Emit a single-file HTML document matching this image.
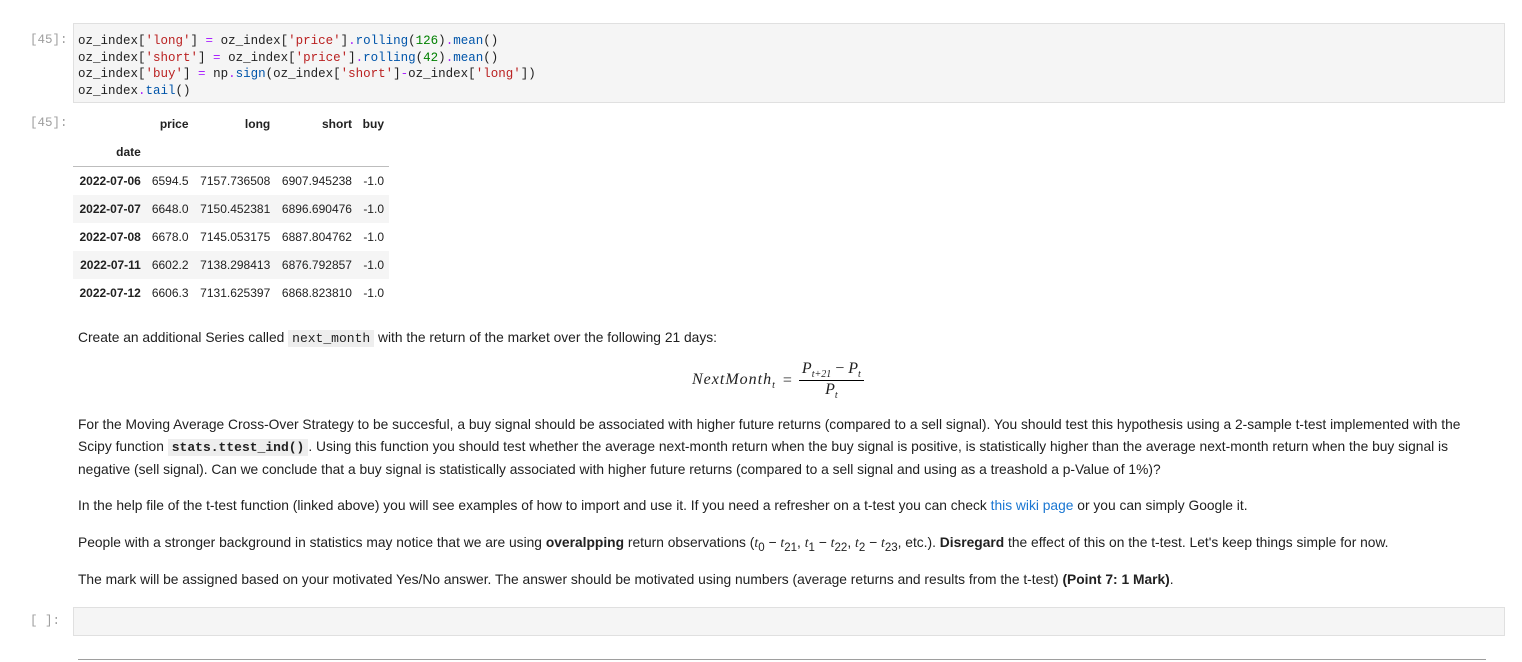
<!DOCTYPE html>
<html><head><style>
body{margin:0;background:#fff;font-family:"Liberation Sans",sans-serif;color:#212121;width:1522px;height:662px;overflow:hidden;position:relative}
.p{position:absolute;left:30px;font-family:"Liberation Mono",monospace;font-size:12.5px;color:#9e9e9e}
.in{position:absolute;left:73px;width:1432px;background:#f5f5f5;border:1px solid #e0e0e0;box-sizing:border-box}
pre{margin:0;font-family:"Liberation Mono",monospace;font-size:12.5px;line-height:16.5px;padding:9px 0 0 4px;color:#212121}
.s{color:#ba2121}.o{color:#aa22ff}.n{color:#008000}.f{color:#0055aa}
table{position:absolute;left:73px;top:110px;border-collapse:collapse;font-size:12px;width:316px}
th,td{text-align:right;padding:0 5px;height:28px}
th{font-weight:bold}
thead tr.d th{border-bottom:1px solid #bdbdbd}
tbody tr:nth-child(odd){background:#fff}tbody tr:nth-child(even){background:#f5f5f5}
.t{position:absolute;left:78px;font-size:13.8px;line-height:22px;width:1410px}
code{font-family:"Liberation Mono",monospace;background:#eee;padding:1px 4px;font-size:13px}
a{color:#1976d2;text-decoration:none}
</style></head><body>
<div class="p" style="top:33px">[45]:</div>
<div class="in" style="top:23px;height:80px"><pre>oz_index[<span class="s">'long'</span>] <span class="o">=</span> oz_index[<span class="s">'price'</span>]<span class="o">.</span><span class="f">rolling</span>(<span class="n">126</span>)<span class="o">.</span><span class="f">mean</span>()
oz_index[<span class="s">'short'</span>] <span class="o">=</span> oz_index[<span class="s">'price'</span>]<span class="o">.</span><span class="f">rolling</span>(<span class="n">42</span>)<span class="o">.</span><span class="f">mean</span>()
oz_index[<span class="s">'buy'</span>] <span class="o">=</span> np<span class="o">.</span><span class="f">sign</span>(oz_index[<span class="s">'short'</span>]<span class="o">-</span>oz_index[<span class="s">'long'</span>])
oz_index<span class="o">.</span><span class="f">tail</span>()</pre></div>
<div class="p" style="top:116px">[45]:</div>
<table><thead><tr><th></th><th>price</th><th>long</th><th>short</th><th>buy</th></tr>
<tr class="d"><th>date</th><th></th><th></th><th></th><th></th></tr></thead>
<tbody>
<tr><th>2022-07-06</th><td>6594.5</td><td>7157.736508</td><td>6907.945238</td><td>-1.0</td></tr>
<tr><th>2022-07-07</th><td>6648.0</td><td>7150.452381</td><td>6896.690476</td><td>-1.0</td></tr>
<tr><th>2022-07-08</th><td>6678.0</td><td>7145.053175</td><td>6887.804762</td><td>-1.0</td></tr>
<tr><th>2022-07-11</th><td>6602.2</td><td>7138.298413</td><td>6876.792857</td><td>-1.0</td></tr>
<tr><th>2022-07-12</th><td>6606.3</td><td>7131.625397</td><td>6868.823810</td><td>-1.0</td></tr>
</tbody></table>
<div class="t" style="top:327px">Create an additional Series called <code>next_month</code> with the return of the market over the following 21 days:</div>
<div style="position:absolute;left:692px;top:360px;font-family:'Liberation Serif',serif;font-size:16px;font-style:italic;display:flex;align-items:center">
<span style="letter-spacing:1px">NextMonth<sub style="font-size:10px">t</sub></span><span style="font-style:normal;margin:0 7px">=</span>
<span style="display:inline-flex;flex-direction:column;align-items:center"><span style="border-bottom:1px solid #000;padding:0 3px">P<sub style="font-size:10px">t+21</sub> <span style="font-style:normal">−</span> P<sub style="font-size:10px">t</sub></span><span>P<sub style="font-size:10px">t</sub></span></span></div>
<div class="t" style="top:414px">For the Moving Average Cross-Over Strategy to be succesful, a buy signal should be associated with higher future returns (compared to a sell signal). You should test this hypothesis using a 2-sample t-test implemented with the Scipy function <code><b>stats.ttest_ind()</b></code>. Using this function you should test whether the average next-month return when the buy signal is positive, is statistically higher than the average next-month return when the buy signal is negative (sell signal). Can we conclude that a buy signal is statistically associated with higher future returns (compared to a sell signal and using as a treashold a p-Value of 1%)?</div>
<div class="t" style="top:495px">In the help file of the t-test function (linked above) you will see examples of how to import and use it. If you need a refresher on a t-test you can check <a>this wiki page</a> or you can simply Google it.</div>
<div class="t" style="top:532px">People with a stronger background in statistics may notice that we are using <b>overalpping</b> return observations (<i style="font-family:'Liberation Serif',serif">t</i><sub>0</sub> − <i style="font-family:'Liberation Serif',serif">t</i><sub>21</sub>, <i style="font-family:'Liberation Serif',serif">t</i><sub>1</sub> − <i style="font-family:'Liberation Serif',serif">t</i><sub>22</sub>, <i style="font-family:'Liberation Serif',serif">t</i><sub>2</sub> − <i style="font-family:'Liberation Serif',serif">t</i><sub>23</sub>, etc.). <b>Disregard</b> the effect of this on the t-test. Let's keep things simple for now.</div>
<div class="t" style="top:569px">The mark will be assigned based on your motivated Yes/No answer. The answer should be motivated using numbers (average returns and results from the t-test) <b>(Point 7: 1 Mark)</b>.</div>
<div class="p" style="top:614px">[ ]:</div>
<div class="in" style="top:607px;height:29px"></div>
<div style="position:absolute;left:78px;top:659px;width:1408px;border-top:1px solid #9e9e9e"></div>
</body></html>
